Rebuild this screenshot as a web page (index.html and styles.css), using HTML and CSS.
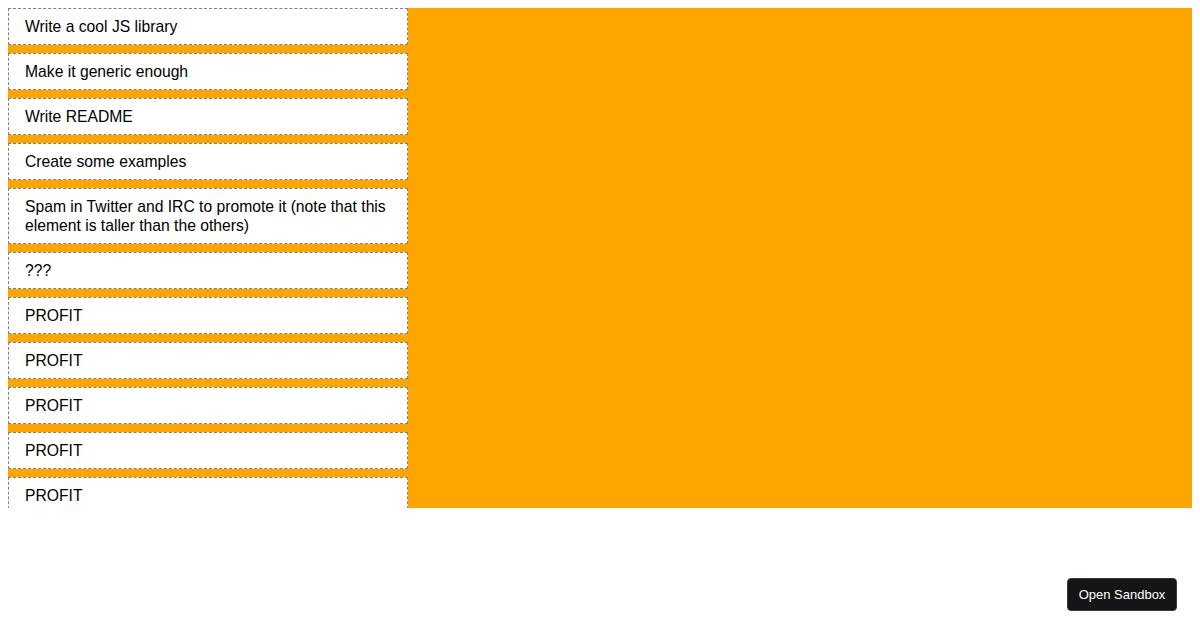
FILE: index.html
```html
<!DOCTYPE html>
<html>
<head>
<meta charset="utf-8">
<link rel="stylesheet" href="styles.css">
</head>
<body>
<div class="board">
  <ul class="list">
    <li class="item">Write a cool JS library</li>
    <li class="item">Make it generic enough</li>
    <li class="item">Write README</li>
    <li class="item">Create some examples</li>
    <li class="item">Spam in Twitter and IRC to promote it (note that this element is taller than the others)</li>
    <li class="item">???</li>
    <li class="item">PROFIT</li>
    <li class="item">PROFIT</li>
    <li class="item">PROFIT</li>
    <li class="item">PROFIT</li>
    <li class="item">PROFIT</li>
    <li class="item">PROFIT</li>
  </ul>
  <div class="pane"></div>
</div>
<a class="sandbox-btn">Open Sandbox</a>
</body>
</html>
```
FILE: styles.css
```css
html, body {
  margin: 0;
  padding: 0;
}
body {
  padding: 8px;
  font-family: "Liberation Sans", Arial, sans-serif;
  background: #fff;
}
.board {
  display: flex;
  height: 500px;
  background: #ffa500;
  overflow: hidden;
}
.list {
  list-style: none;
  margin: 0;
  padding: 0;
  width: 400px;
  flex: 0 0 400px;
  display: flex;
  flex-direction: column;
  gap: 8px;
}
.item {
  background: #fff;
  border: 1px dashed #808080;
  padding: 8px 16px;
  font-size: 15.7px;
  line-height: 19px;
  color: #000;
  flex: 0 0 auto;
}
.pane {
  flex: 1;
}
.sandbox-btn {
  position: fixed;
  right: 23px;
  bottom: 19px;
  width: 110px;
  height: 33px;
  box-sizing: border-box;
  background: #151515;
  color: #fff;
  border: 1px solid #3a3a3a;
  border-radius: 4px;
  font-family: "Liberation Sans", Arial, sans-serif;
  font-size: 13px;
  display: flex;
  align-items: center;
  justify-content: center;
}
```
